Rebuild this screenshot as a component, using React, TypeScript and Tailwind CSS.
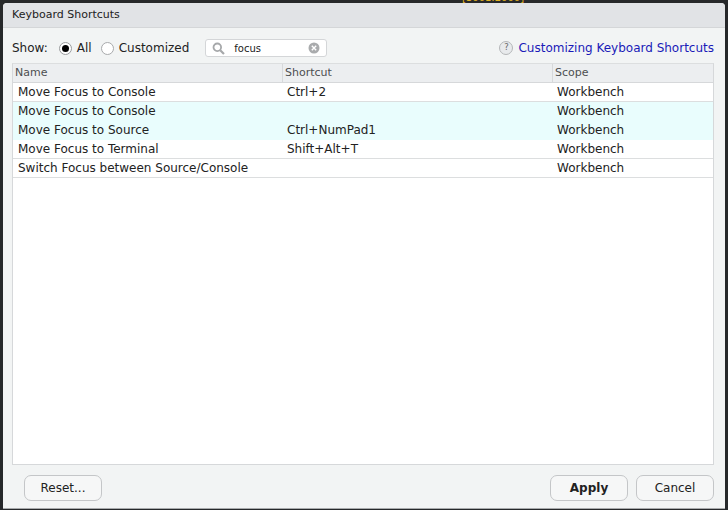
const font = { fontFamily: '"DejaVu Sans", sans-serif' };

const rows = [
  { name: "Move Focus to Console", shortcut: "Ctrl+2", hl: false, border: true },
  { name: "Move Focus to Console", shortcut: "", hl: true, border: false },
  { name: "Move Focus to Source", shortcut: "Ctrl+NumPad1", hl: true, border: false },
  { name: "Move Focus to Terminal", shortcut: "Shift+Alt+T", hl: false, border: true },
  { name: "Switch Focus between Source/Console", shortcut: "", hl: false, border: true },
];

function Btn({ label, bold, w }: { label: string; bold?: boolean; w: string }) {
  return (
    <button className={`h-[26px] ${w} rounded-[7px] border border-[#c4c6c8] bg-[#f6f7f7] text-[12px] text-[#222] ${bold ? "font-bold" : ""}`}>
      {label}
    </button>
  );
}

export default function App() {
  return (
    <div style={font} className="relative h-[510px] w-[728px] overflow-hidden bg-[#26282a] pl-[3px] pr-[3px] pt-[3px] pb-[1px]">
      <span className="absolute left-[462px] top-[-7px] text-[10px] leading-[10px] text-[#e0b020]">[3001:2000]</span>
      <div className="relative flex h-full flex-col overflow-hidden rounded-t-[4px] border-b border-[#a8aaac] bg-[#f2f4f4]">
        <div className="flex h-[25px] shrink-0 items-center border-b border-[#d4d6d8] bg-[#e1e3e6] pl-[9px] pt-[1px] text-[11px] text-[#222]">
          Keyboard Shortcuts
        </div>
        <div className="flex h-[35px] shrink-0 items-center pl-[9px] pr-[11px] pt-[5px] text-[12px] text-[#222]">
          <span>Show:</span>
          <span className="ml-[11px] flex h-[13px] w-[13px] items-center justify-center rounded-full border border-[#9a9c9e] bg-white">
            <span className="h-[7px] w-[7px] rounded-full bg-black" />
          </span>
          <span className="ml-[5px]">All</span>
          <span className="ml-[9px] h-[13px] w-[13px] rounded-full border border-[#a8aaac] bg-white" />
          <span className="ml-[5px]">Customized</span>
          <div className="ml-[16px] flex h-[18px] w-[122px] items-center rounded-[3px] border border-[#d4d6d8] bg-white pl-[6px] pr-[6px]">
            <svg width="13" height="13" viewBox="0 0 13 13" fill="none" stroke="#a6a8aa" strokeWidth="1.8">
              <circle cx="5.3" cy="5.3" r="3.8" />
              <path d="M8.2 8.2 L12 12" strokeWidth="2.2" />
            </svg>
            <span className="ml-[9px] text-[10px]">focus</span>
            <svg className="ml-auto" width="12" height="12" viewBox="0 0 12 12">
              <circle cx="6" cy="6" r="5.5" fill="#a9abad" />
              <path d="M3.8 3.8 L8.2 8.2 M8.2 3.8 L3.8 8.2" stroke="#fff" strokeWidth="1.4" />
            </svg>
          </div>
          <span className="ml-auto mb-[1px] flex h-[14px] w-[14px] items-center justify-center rounded-full border border-[#b4b6b8] bg-[#e8eaec] text-[8.5px] text-[#666]">
            ?
          </span>
          <a className="ml-[5px] mb-[1px] text-[#1a1ab8]">Customizing Keyboard Shortcuts</a>
        </div>
        <div className="ml-[9px] mr-[11px] flex h-[402px] shrink-0 flex-col border border-[#d6d8da] border-t-[#dcdedf] bg-white">
          <div className="flex h-[19px] shrink-0 items-center border-b border-[#d6d8da] bg-[#eceef0] text-[11px] text-[#4c4e50]">
            <span className="h-full w-[270px] border-r border-[#d6d8da] pl-[2px] leading-[18px]">Name</span>
            <span className="h-full w-[270px] border-r border-[#d6d8da] pl-[2px] leading-[18px]">Shortcut</span>
            <span className="h-full pl-[2px] leading-[18px]">Scope</span>
          </div>
          {rows.map((r, i) => (
            <div
              key={i}
              className={`flex h-[19px] shrink-0 items-center border-b text-[12px] text-[#222] ${r.hl ? "bg-[#e9fdfd]" : "bg-white"} ${r.border ? "border-[#dcdedf]" : "border-transparent"}`}
            >
              <span className="w-[270px] pl-[5px]">{r.name}</span>
              <span className="w-[270px] pl-[4px]">{r.shortcut}</span>
              <span className="pl-[4px]">Workbench</span>
            </div>
          ))}
        </div>
        <div className="flex flex-1 items-start pl-[21px] pr-[11px] pt-[10px]">
          <Btn label="Reset..." w="w-[78px]" />
          <div className="ml-auto flex gap-[8px]">
            <Btn label="Apply" bold w="w-[78px]" />
            <Btn label="Cancel" w="w-[78px]" />
          </div>
        </div>
      </div>
    </div>
  );
}
